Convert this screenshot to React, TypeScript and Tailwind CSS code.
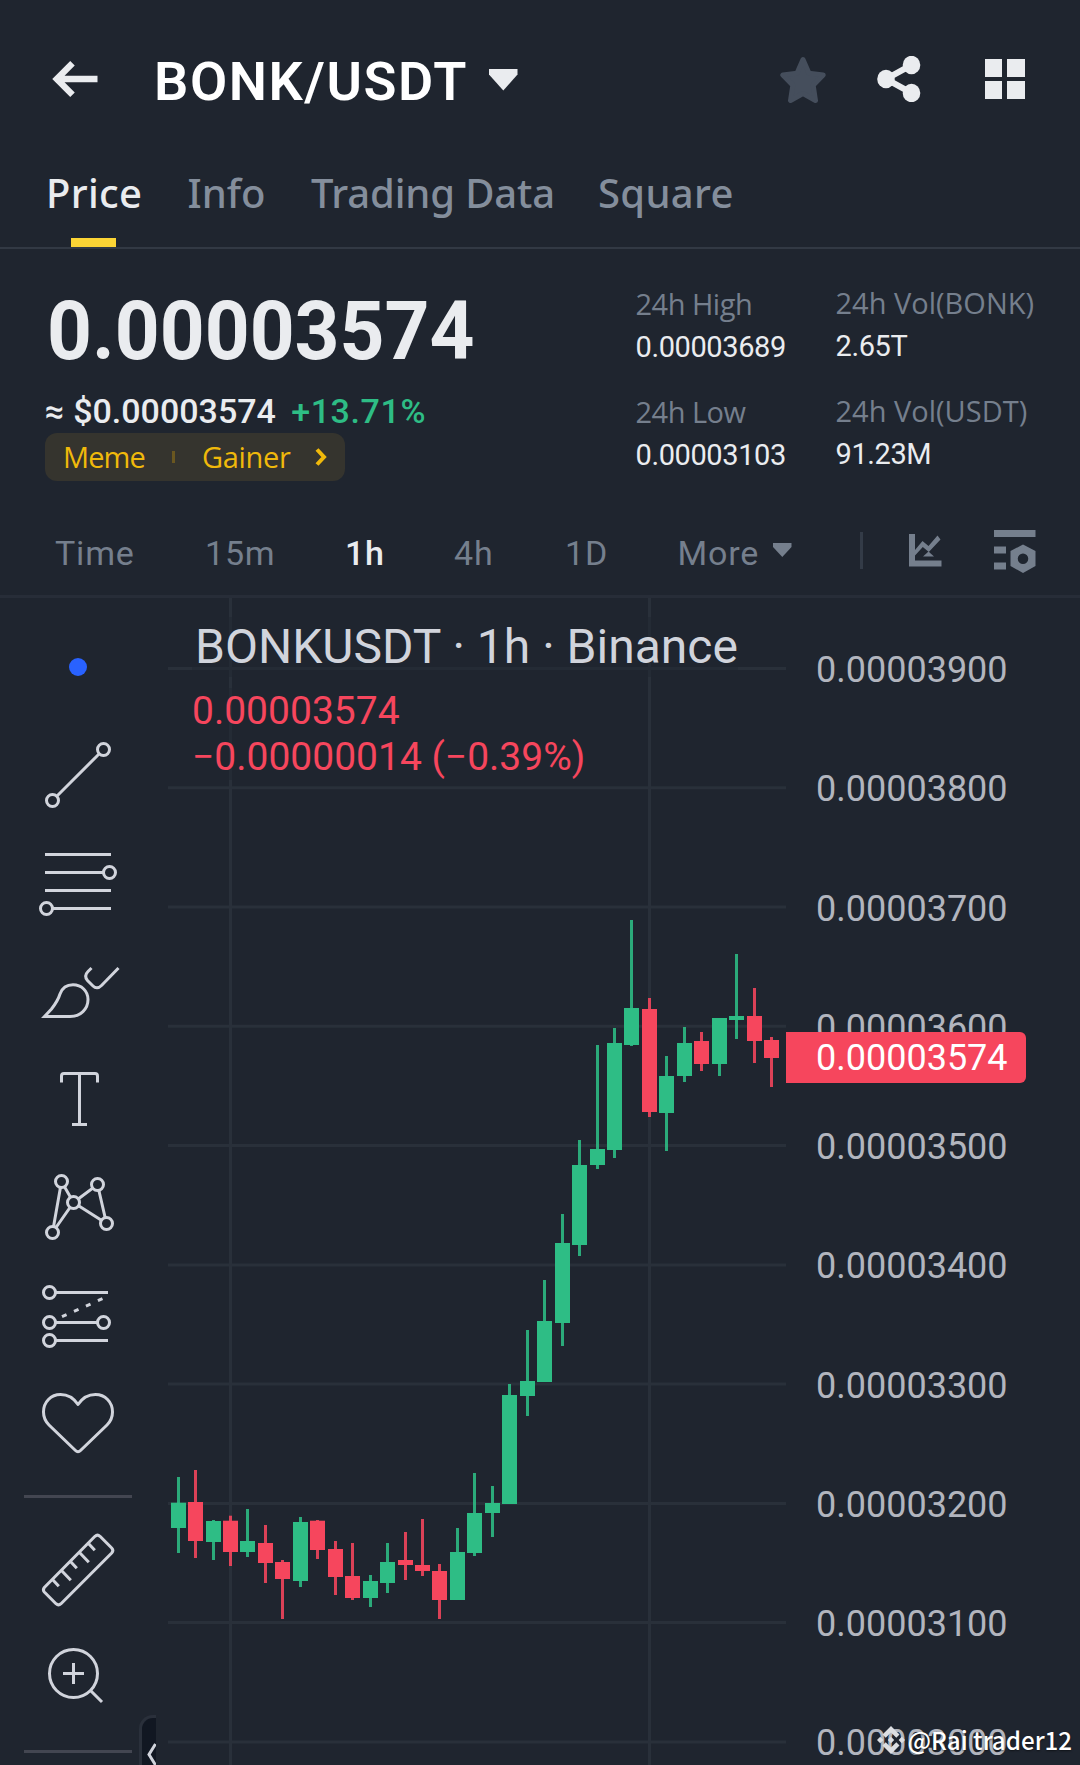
import type { ReactNode } from 'react';

type Candle = [x: number, high: number, top: number, bottom: number, low: number, up: 0 | 1];

const CHART_TOP = 598;

const candles: Candle[] = [
  [178.5, 1477, 1502.7, 1528, 1553, 1],
  [195.5, 1470, 1502, 1541, 1558, 0],
  [213.5, 1520, 1521, 1542, 1560, 1],
  [230.5, 1515.7, 1520.7, 1552, 1566, 0],
  [247.5, 1509, 1541, 1552, 1557, 1],
  [265.5, 1525, 1543, 1563, 1583, 0],
  [282.5, 1560, 1562, 1579, 1619, 0],
  [300.5, 1517, 1522, 1581, 1587, 1],
  [317.5, 1520, 1520.7, 1550, 1559, 0],
  [335.5, 1541, 1549, 1577, 1595, 0],
  [352.5, 1543, 1576, 1598, 1600, 0],
  [370.5, 1575, 1581, 1598, 1607, 1],
  [387.5, 1543, 1562, 1583, 1593, 1],
  [405.5, 1532, 1560, 1565, 1580, 0],
  [422.5, 1519, 1565, 1571, 1576, 0],
  [439.5, 1564, 1571, 1600, 1619, 0],
  [457.5, 1528, 1552, 1600, 1600, 1],
  [474.5, 1473, 1513, 1553, 1556, 1],
  [492.5, 1486, 1503, 1513, 1537, 1],
  [509.5, 1384, 1395, 1504, 1504, 1],
  [527.5, 1330, 1381, 1396, 1416, 1],
  [544.5, 1280, 1321, 1382, 1382, 1],
  [562.5, 1214, 1243, 1323, 1346, 1],
  [579.5, 1140, 1165, 1245, 1256, 1],
  [597.5, 1045, 1149, 1165, 1169, 1],
  [614.5, 1028, 1043, 1150, 1158, 1],
  [631.5, 920, 1008, 1045, 1046, 1],
  [649.5, 998, 1009, 1112, 1117, 0],
  [666.5, 1056, 1076, 1113, 1151, 1],
  [684.5, 1027, 1043, 1076, 1082, 1],
  [701.5, 1032, 1041, 1064, 1071, 0],
  [719.5, 1018, 1018, 1064, 1076, 1],
  [736.5, 954, 1016, 1020, 1039, 1],
  [754.5, 988, 1016, 1041, 1063, 0],
  [771.5, 1037, 1040, 1058, 1087, 0],
];

const gridYs = [668.5, 787.8, 907, 1026.3, 1145.5, 1265, 1384, 1503.5, 1622.5, 1742];

const priceLabels = [
  '0.00003900',
  '0.00003800',
  '0.00003700',
  '0.00003600',
  '0.00003500',
  '0.00003400',
  '0.00003300',
  '0.00003200',
  '0.00003100',
  '0.00003000',
];

function Tool({ y, h, children }: { y: number; h: number; children: ReactNode }) {
  return (
    <svg
      width={168}
      height={h}
      viewBox={`0 ${y} 168 ${h}`}
      fill="none"
      stroke="#d1d4dc"
      strokeWidth={3}
      className="block shrink-0"
    >
      {children}
    </svg>
  );
}

function Ring({ x, y }: { x: number; y: number }) {
  return <circle cx={x} cy={y} r={6} fill="#1f252f" />;
}

function Toolbar() {
  return (
    <div className="flex w-[168px] shrink-0 flex-col">
      <Tool y={598} h={122}>
        <circle cx={78} cy={667} r={9} fill="#2962ff" stroke="none" />
      </Tool>
      <Tool y={720} h={110}>
        <path d="M52.5 800.5 103.5 749.5" />
        <Ring x={52.5} y={800.5} />
        <Ring x={103.5} y={749.5} />
      </Tool>
      <Tool y={830} h={110}>
        <path d="M45 854.5h66M45 872.5h66M45 890.5h66M45 908.5h66" />
        <Ring x={109.5} y={872.5} />
        <Ring x={46.5} y={908.5} />
      </Tool>
      <Tool y={940} h={105}>
        <path d="M44.5 1016.5H70C80.500 1016.500 88 1009 88 999.500C88 991 81.500 984.800 73 984.800C66.500 984.800 62 988.500 60 994C58 1000.500 55 1004.500 51.500 1009Z" />
        <path d="M91.500 968 88 971.500C85 974.500 85 977.500 87.500 980.500L93 986C95.500 988.500 98.500 988.500 101.500 985.500L118.500 968" />
      </Tool>
      <Tool y={1045} h={105}>
        <path d="M61.500 1082.500V1076Q61.500 1073.500 64 1073.500H95Q97.500 1073.500 97.500 1076V1082.500M79.500 1073.500V1124.500M72 1124.500H87" />
      </Tool>
      <Tool y={1150} h={110}>
        <path d="M52.500 1232.500 61.500 1181.500 73.500 1202.500 97.500 1184.500 106.500 1223.500 73.500 1202.500Z" />
        <Ring x={61.5} y={1181.5} />
        <Ring x={97.5} y={1184.5} />
        <Ring x={73.5} y={1202.5} />
        <Ring x={106.5} y={1223.5} />
        <Ring x={52.5} y={1232.5} />
      </Tool>
      <Tool y={1260} h={110}>
        <path d="M49.500 1292.500H108M49.500 1322.500H103.500M49.500 1340.500H108" />
        <path d="M62 1316.700 104 1298" strokeDasharray="5 8.100" />
        <Ring x={49.5} y={1292.5} />
        <Ring x={49.5} y={1322.5} />
        <Ring x={103.5} y={1322.5} />
        <Ring x={49.5} y={1340.5} />
      </Tool>
      <Tool y={1370} h={105}>
        <path
          strokeLinejoin="round"
          d="M78 1404.500C74 1398.500 68 1394.500 60.500 1394.500C51 1394.500 43.500 1402 43.500 1412C43.500 1417.500 45.500 1421.500 49 1425L75.500 1450.500C77 1452 79 1452 80.500 1450.500L107 1425C110.500 1421.500 112.500 1417.500 112.500 1412C112.500 1402 105 1394.500 95.500 1394.500C88 1394.500 82 1398.500 78 1404.500Z"
        />
      </Tool>
      <div className="mt-[20px] mb-[22px] ml-6 h-[3px] w-[108px] bg-[#434651]" />
      <Tool y={1520} h={100}>
        <path
          strokeLinejoin="round"
          d="M44.300 1587.500 95 1536.300Q97.500 1534 100 1536.300L111.700 1548Q114 1550.500 111.700 1553L61 1603.700Q58.500 1606 56 1603.700L44.300 1592Q42.500 1590 44.300 1587.500ZM52.500 1579.500 58.800 1586.300M61.500 1570.500 70.800 1580.300M70.500 1561.500 76.800 1568.300M79.500 1552.500 88.800 1562.300M88.500 1543.500 94.800 1550.300"
        />
      </Tool>
      <Tool y={1620} h={110}>
        <circle cx={73.5} cy={1673.5} r={24} />
        <path d="M63 1673.500H84M73.500 1663V1684M90.500 1690.500 102 1702" />
      </Tool>
      <div className="mt-5 ml-6 h-[3px] w-[108px] bg-[#434651]" />
    </div>
  );
}

function CandleChart() {
  return (
    <svg width={618} height={1167} viewBox={`168 ${CHART_TOP} 618 1167`} className="block shrink-0">
      <g stroke="#29303a" strokeWidth={3}>
        {gridYs.map((y) => (
          <path key={y} d={`M168 ${y}H786`} />
        ))}
        <path d="M230.500 598V1765M649.500 598V1765" />
      </g>
      {candles.map(([x, high, top, bottom, low, up]) => (
        <g key={x} fill={up ? '#2ebd85' : '#f6465d'}>
          <rect x={x - 1.5} y={high} width={3} height={low - high} opacity={0.88} />
          <rect x={x - 7.5} y={top} width={15} height={bottom - top} />
        </g>
      ))}
    </svg>
  );
}

function Header() {
  return (
    <header className="flex h-[158px] shrink-0 items-center text-[#eaecef]">
      <svg width={46} height={40} viewBox="52 59 46 40" fill="none" stroke="#eaecef" strokeWidth={6.4} className="ml-[52px]">
        <path d="M97.500 79H56M72.500 63.300 56.800 79 72.500 94.700" />
      </svg>
      <h1 className="mt-[5px] ml-[56px] w-[315px] whitespace-nowrap text-[54px] leading-[60px] font-semibold tracking-[1.6px] text-white">
        BONK/USDT
      </h1>
      <svg width={29} height={22} viewBox="0 0 29 22" fill="#eaecef" className="ml-[19.500px] mt-0.5">
        <path d="M0 0H28.500V5.500L14.300 21.500 0 5.500Z" />
      </svg>
      <svg width={46} height={48} viewBox="0 0 46 48" fill="#454e5c" stroke="#454e5c" strokeWidth={5} strokeLinejoin="round" className="ml-[262.500px] mt-0.5">
        <path d="M23 3.500 29 17.300 43.200 19 33.200 29.300 35.500 44.500 23 37.500 10.500 44.500 12.800 29.300 2.800 19 17 17.300Z" />
      </svg>
      <svg width={44} height={46} viewBox="0 0 44 46" fill="#eaecef" className="ml-[50.500px]">
        <path d="M34.500 9 9 23 34.500 37" fill="none" stroke="#eaecef" strokeWidth={6} />
        <ellipse cx={34.5} cy={9} rx={8.8} ry={9.2} />
        <ellipse cx={9} cy={23} rx={8.8} ry={9.2} />
        <ellipse cx={34.5} cy={37} rx={8.8} ry={9.2} />
      </svg>
      <div className="ml-[64px] grid h-10 w-10 grid-cols-2 gap-[4.500px]">
        <i className="bg-[#eaecef]" />
        <i className="bg-[#eaecef]" />
        <i className="bg-[#eaecef]" />
        <i className="bg-[#eaecef]" />
      </div>
    </header>
  );
}

function Tabs() {
  return (
    <nav className="flex h-[91px] shrink-0 border-b-2 border-[#323944] font-['Noto_Sans'] text-[40px] leading-[40px] font-medium whitespace-nowrap text-[#848e9c]">
      <div className="ml-[46px] flex w-[141.500px] flex-col pt-[14.500px] text-[#eaecef]">
        <span className="tracking-[0.300px]">Price</span>
        <span className="mt-auto ml-[25px] h-[9px] w-[45px] bg-[#fcd535]" />
      </div>
      <span className="w-[123.500px] pt-[14.500px]">Info</span>
      <span className="w-[287px] pt-[14.500px] tracking-[-0.150px]">Trading Data</span>
      <span className="pt-[14.500px] tracking-[0.300px]">Square</span>
    </nav>
  );
}

function Stat({ label, value, tight }: { label: string; value: string; tight?: boolean }) {
  return (
    <div className="flex h-[108.300px] flex-col text-[29px] leading-9 whitespace-nowrap">
      <span className={`font-['Open_Sans'] text-[#757f8d] ${tight ? 'tracking-[-0.5px]' : ''}`}>{label}</span>
      <span className="mt-[7.500px] font-[450] tracking-[-0.400px] text-[#eaecef]">{value}</span>
    </div>
  );
}

function Summary() {
  return (
    <section className="flex h-[251px] shrink-0">
      <div className="flex w-[635.500px] flex-col items-start pt-[41px] whitespace-nowrap">
        <div className="ml-[47px] origin-left scale-x-[0.956] text-[82px] leading-[82px] font-bold text-[#eaecef]">
          0.00003574
        </div>
        <div className="mt-[18.500px] ml-[44.500px] flex text-[34px] leading-[40px] font-medium text-[#eaecef]">
          <span className="w-[28.700px]">≈</span>
          <span className="w-[218px]">$0.00003574</span>
          <span className="tracking-[0.600px] text-[#2ebd85]">+13.71%</span>
        </div>
        <div className="mt-[2.500px] ml-[45px] flex h-[48px] w-[300px] items-center rounded-xl bg-[#35342e] font-['Open_Sans'] text-[29px] leading-9 text-[#f0b90b]">
          <span className="ml-[18px] w-[109px] tracking-[-0.900px]">Meme</span>
          <i className="h-3 w-[3px] bg-[#6a5720]" />
          <span className="ml-[27px] w-[113px] tracking-[-0.300px]">Gainer</span>
          <svg width={13} height={18} viewBox="0 0 13 18" fill="none" stroke="#f0b90b" strokeWidth={4}>
            <path d="M2 1.500 9 9 2 16.500" />
          </svg>
        </div>
      </div>
      <div className="w-[200px] pt-[36.500px]">
        <Stat label="24h High" value="0.00003689" tight />
        <Stat label="24h Low" value="0.00003103" tight />
      </div>
      <div className="pt-[35.500px]">
        <Stat label="24h Vol(BONK)" value="2.65T" />
        <Stat label="24h Vol(USDT)" value="91.23M" />
      </div>
    </section>
  );
}

function Intervals() {
  return (
    <section className="flex h-[98px] shrink-0 items-center border-b-[3px] border-[#272d38] text-[34px] leading-[40px] tracking-[0.800px] whitespace-nowrap text-[#757f8d]">
      <span className="mt-[11px] ml-[55px] w-[150px]">Time</span>
      <span className="mt-[11px] w-[140px]">15m</span>
      <span className="mt-[10px] w-[109px] font-medium text-[#eaecef]">1h</span>
      <span className="mt-[11px] w-[111px]">4h</span>
      <span className="mt-[11px] w-[112.500px]">1D</span>
      <span className="mt-[11px] w-[95px]">More</span>
      <svg width={19} height={14} viewBox="0 0 19 14" fill="#757f8d" className="mt-[5px]">
        <path d="M0 0H18.500V4L9.300 14 0 4Z" />
      </svg>
      <i className="mt-[5px] ml-[68.500px] h-[37px] w-[2.500px] bg-[#333b47]" />
      <svg width={33} height={33} viewBox="0 0 33 33" fill="#757f8d" className="mt-[5px] ml-[46px]">
        <path d="M0 0H6V16L13.500 7 19.500 12 28.500 1.500 31.500 5.500 19.800 18 13.800 13 6 21.500V26.500H32.500V32.500H0Z" />
        <path d="M19.500 17.500 25 22.500H14Z" />
      </svg>
      <svg width={42} height={43} viewBox="0 0 42 43" fill="#757f8d" className="mt-[7px] ml-[52px]">
        <path d="M0 0H41.500V7H0ZM0 16.500H12V23.500H0ZM0 32.500H12V39.500H0Z" />
        <path
          fillRule="evenodd"
          d="M29 14.500 41.500 21V36L29 43 16.500 36V21ZM29 23.500A5.200 5.200 0 1 0 29 34A5.200 5.200 0 1 0 29 23.500Z"
        />
      </svg>
    </section>
  );
}

export default function App() {
  return (
    <div className="relative flex h-[1765px] w-[1080px] flex-col overflow-hidden bg-[#1f252f] font-['Roboto',sans-serif]">
      <Header />
      <Tabs />
      <Summary />
      <Intervals />
      <main className="relative flex h-[1167px] shrink-0 overflow-hidden">
        <Toolbar />
        <CandleChart />
        <div className="flex w-[294px] shrink-0 flex-col pt-[13px] pl-[30px] text-[36px] whitespace-nowrap text-[#b2b5be]">
          {priceLabels.map((p) => (
            <span key={p} className="h-[119.250px] shrink-0 leading-[119px]">
              {p}
            </span>
          ))}
        </div>

        <div className="absolute top-[19px] left-[192px] flex flex-col items-start whitespace-nowrap">
          <span className="bg-[#1f252f]/50 pl-[3px] text-[48px] leading-[60px] text-[#d1d4dc]">BONKUSDT · 1h · Binance</span>
          <span className="mt-[11px] bg-[#1f252f]/50 text-[39px] leading-[46px] text-[#f6465d]">0.00003574</span>
          <span className="bg-[#1f252f]/50 text-[39px] leading-[46px] text-[#f6465d]">−0.00000014 (−0.39%)</span>
        </div>

        <div className="absolute top-[434px] left-[786px] h-[51px] w-[240px] rounded-r-md bg-[#f6465d] pl-[30px] text-[36px] leading-[53px] text-white">
          0.00003574
        </div>

        <div className="absolute top-[1117px] left-[139px] h-[70px] w-[17px] overflow-hidden rounded-tl-[14px] border-t-[3px] border-l-[3px] border-[#2a303b] bg-[#111722]">
          <svg width={14} height={48} viewBox="142 1718 14 48" fill="none" stroke="#d1d4dc" strokeWidth={3}>
            <path d="M155.500 1744 149 1754.500 155.500 1765" />
          </svg>
        </div>

        <div className="absolute top-[1127px] left-[877px] flex items-center whitespace-nowrap">
          <svg width={28} height={28} viewBox="0 0 28 28" fill="#dcdee2">
            <path d="M14 0 22.500 8.500 19.300 11.700 14 6.400 8.700 11.700 5.500 8.500ZM3.200 10.800 6.400 14 3.200 17.200 0 14ZM14 10.800 17.200 14 14 17.200 10.800 14ZM24.800 10.800 28 14 24.800 17.200 21.600 14ZM14 28 5.500 19.500 8.700 16.300 14 21.600 19.300 16.300 22.500 19.500Z" />
          </svg>
          <span className="ml-[2.500px] font-['Noto_Sans_CJK_SC',sans-serif] text-[24.200px] leading-[30px] font-medium text-white [text-shadow:0_1px_2px_rgb(0_0_0/0.5)]">
            @Rai trader12
          </span>
        </div>
      </main>
    </div>
  );
}
